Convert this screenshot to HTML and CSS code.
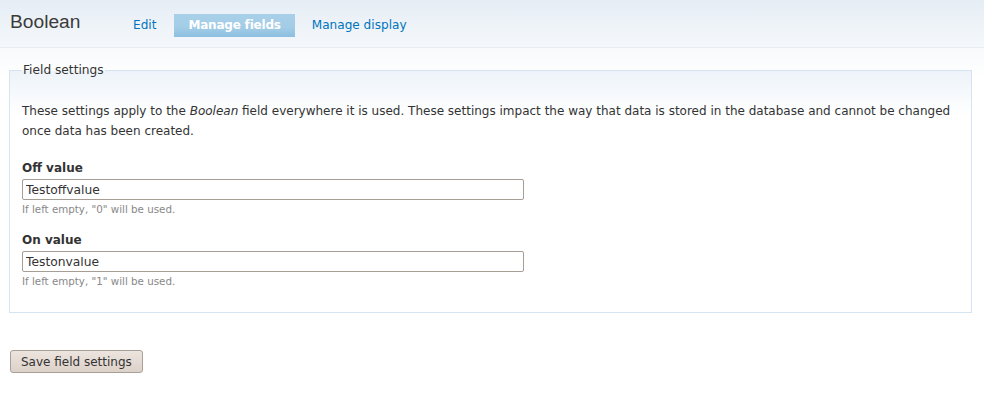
FILE: index.html
```html
<!DOCTYPE html>
<html>
<head>
<meta charset="utf-8">
<link rel="stylesheet" href="styles.css">
</head>
<body>
<div class="header">
  <h1 class="title">Boolean</h1>
  <ul class="tabs">
    <li><a href="#">Edit</a></li>
    <li class="active"><a href="#">Manage fields</a></li>
    <li><a href="#">Manage display</a></li>
  </ul>
</div>
<div class="page">
  <fieldset class="fs">
    <legend>Field settings</legend>
    <p class="intro">These settings apply to the <em>Boolean</em> field everywhere it is used. These settings impact the way that data is stored in the database and cannot be changed once data has been created.</p>
    <div class="item">
      <label>Off value</label>
      <input type="text" value="Testoffvalue">
      <div class="desc">If left empty, "0" will be used.</div>
    </div>
    <div class="item">
      <label>On value</label>
      <input type="text" value="Testonvalue">
      <div class="desc">If left empty, "1" will be used.</div>
    </div>
  </fieldset>
  <button class="btn">Save field settings</button>
</div>
</body>
</html>
```
FILE: styles.css
```css
html, body { margin: 0; padding: 0; background: #fff; }
body { font-family: "DejaVu Sans", sans-serif; font-size: 12px; color: #333; }
.header {
  height: 48px;
  border-bottom: 1px solid #e6ecf1;
  background: linear-gradient(#e5edf5, #f5f8fb);
  display: flex;
  align-items: center;
  padding-left: 10px;
  box-sizing: border-box;
}
.title {
  margin: 0;
  font-family: "Liberation Sans", Arial, sans-serif;
  font-weight: normal;
  font-size: 19.2px;
  color: #3b3b3b;
  width: 110px;
  position: relative;
  top: -2px;
}
.tabs { list-style: none; margin: 0; padding: 0; display: flex; gap: 4px; margin-top: 3px; }
.tabs li a {
  display: block;
  padding: 0 13px;
  height: 23px;
  line-height: 23px;
  color: #0074bd;
  text-decoration: none;
  font-size: 12.1px;
}
.tabs li.active { margin-left: 1px; }
.tabs li.active a {
  padding: 0 14px;
  background: linear-gradient(#a8d0e9, #a3cce6 60%, #8bbfe0);
  color: #fff;
  font-weight: bold;
  font-size: 12px;
  letter-spacing: -0.2px;
}
.page { padding: 14px 12px 0 9px; background: linear-gradient(#f8fafc, #ffffff 30px); }
.fs {
  margin: 0;
  padding: 0 12px 24px;
  border: 1px solid #d5e4f0;
  background: linear-gradient(#edf3f9, #ffffff 45px);
  min-width: 0;
}
.fs legend { padding: 0 1px; line-height: 16px; font-size: 12.2px; color: #333; }
.intro { margin: 23px 0 0; line-height: 20px; }
.item { display: flex; flex-direction: column; align-items: flex-start; }
.item label { font-weight: bold; font-size: 12px; line-height: 20px; margin-top: 17px; margin-bottom: 1px; }
.item + .item label { margin-top: 14px; }
.item input {
  width: 502px;
  height: 21px;
  box-sizing: border-box;
  border: 1px solid #a69d94;
  border-radius: 2px;
  padding: 0 3px;
  font-family: "DejaVu Sans", sans-serif;
  font-size: 12.3px;
  color: #333;
  background: #fff;
  margin: 0;
}
.desc { font-size: 10.3px; color: #888; line-height: 14px; margin-top: 2px; }
.btn {
  margin-top: 37px;
  margin-left: 1px;
  height: 23px;
  padding: 0 10px;
  font-family: "DejaVu Sans", sans-serif;
  font-size: 12px;
  color: #333;
  border: 1px solid #a89f96;
  border-radius: 3px;
  background: linear-gradient(#ece4de, #ddd2ca);
}
```
